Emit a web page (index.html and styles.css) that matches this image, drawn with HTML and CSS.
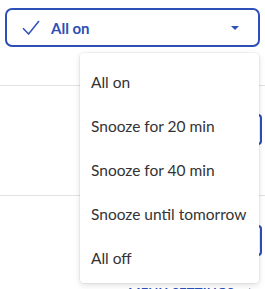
FILE: index.html
```html
<!DOCTYPE html>
<html>
<head>
<meta charset="utf-8">
<link rel="stylesheet" href="styles.css">
</head>
<body>
<div class="page">
  <button class="select">
    <svg class="check" width="18" height="15" viewBox="0 0 18 15"><path d="M1 8.2 L6.6 14 L17 1" fill="none" stroke="#2d4fb8" stroke-width="1.5" stroke-linejoin="miter"/></svg>
    <span class="select-label">All on</span>
    <svg class="caret" width="8" height="4" viewBox="0 0 8 4"><path d="M0 0 H8 L4 4 Z" fill="#2d4fb8"/></svg>
  </button>

  <div class="rows">
    <div class="row row-first">
      <div class="row-btn"></div>
    </div>
    <div class="row row-second">
      <div class="row-btn"></div>
    </div>
    <div class="footer">
      <span class="footer-link">MENU SETTINGS</span>
      <svg class="footer-icon" width="8" height="10" viewBox="0 0 8 10"><path d="M1 1 L6 5 L1 9" fill="none" stroke="#2d4fb8" stroke-width="2"/></svg>
    </div>
  </div>

  <ul class="menu">
    <li class="menu-item">All on</li>
    <li class="menu-item">Snooze for 20 min</li>
    <li class="menu-item">Snooze for 40 min</li>
    <li class="menu-item">Snooze until tomorrow</li>
    <li class="menu-item">All off</li>
  </ul>
</div>
</body>
</html>
```
FILE: styles.css
```css
html, body {
  margin: 0;
  padding: 0;
  background: #ffffff;
  overflow: hidden;
}

body {
  font-family: "Lato", "Noto Sans", sans-serif;
  color: #333333;
}

.page {
  position: relative;
  width: 265px;
  height: 289px;
  padding-top: 8px;
  box-sizing: border-box;
}

.select {
  display: flex;
  align-items: center;
  box-sizing: border-box;
  width: 255px;
  height: 39px;
  margin: 0 0 0 5px;
  padding: 0 19px 0 15px;
  border: 2px solid #2d4fb8;
  border-radius: 7px;
  background: #ffffff;
  font-family: inherit;
  cursor: pointer;
}

.check {
  flex: none;
  display: block;
}

.select-label {
  flex: 1;
  margin-left: 11px;
  text-align: left;
  font-size: 15px;
  font-weight: 700;
  line-height: 1.2;
  color: #2d4fb8;
}

.caret {
  flex: none;
  display: block;
}

.rows {
  margin-top: 38px;
}

.row {
  display: flex;
  justify-content: flex-end;
  border-top: 1px solid #e2e2e2;
  padding-right: 3px;
}

.row-first {
  padding-top: 28px;
  padding-bottom: 50px;
}

.row-second {
  padding-top: 29px;
  padding-bottom: 27px;
}

.row-btn {
  width: 110px;
  height: 31px;
  box-sizing: border-box;
  border: 2px solid #2d4fb8;
  border-radius: 4px;
}

.footer {
  display: flex;
  align-items: center;
  justify-content: flex-end;
  gap: 14px;
  padding-right: 9px;
  height: 20px;
}

.footer-link {
  font-size: 13px;
  font-weight: 700;
  line-height: 20px;
  color: #2d4fb8;
  letter-spacing: 0.2px;
}

.footer-icon {
  display: block;
}

.menu {
  position: absolute;
  left: 80px;
  top: 53px;
  width: 179px;
  height: 230px;
  box-sizing: border-box;
  margin: 0;
  padding: 7px 0 3px;
  list-style: none;
  background: #ffffff;
  border-radius: 4px;
  box-shadow: 0 0 0 1px rgba(0, 0, 0, 0.04), 0 2px 6px rgba(0, 0, 0, 0.13);
}

.menu-item {
  height: 44px;
  padding-left: 11px;
  font-size: 15.5px;
  line-height: 44px;
  color: #333333;
  white-space: nowrap;
}
```
